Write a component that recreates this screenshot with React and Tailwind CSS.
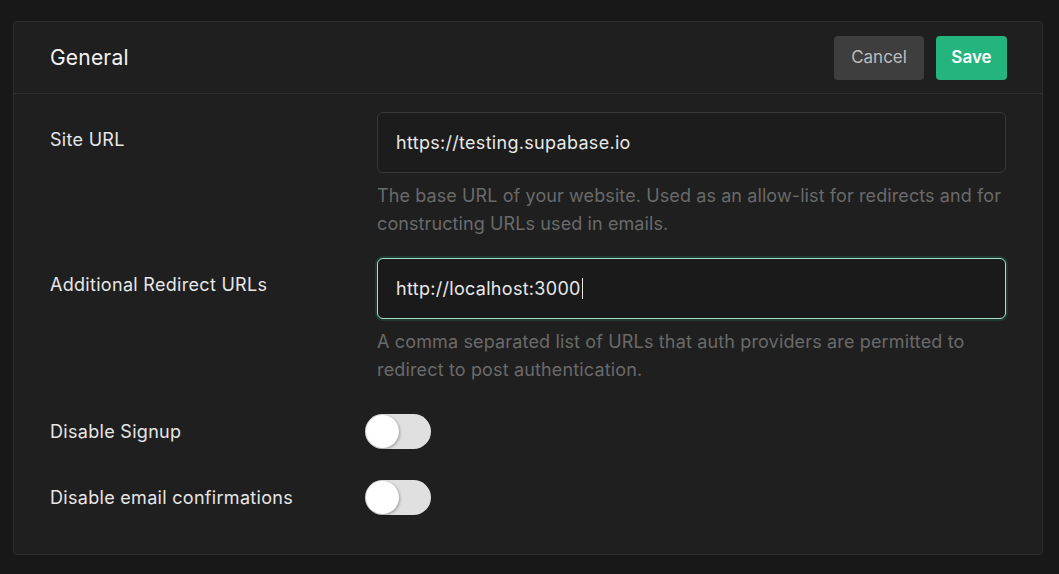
export default function App() {
  const font = { fontFamily: "Inter, 'Noto Sans', sans-serif" };
  const Toggle = () => (
    <div className="w-[66px] h-[35px] rounded-full bg-[#e0e0e0] relative shrink-0">
      <div className="absolute left-[1px] top-[1px] w-[33px] h-[33px] rounded-full bg-white shadow-[1px_1px_3px_rgba(0,0,0,0.3)]" />
    </div>
  );
  return (
    <div className="w-[1059px] h-[574px] bg-[#181818] pt-[21px] pl-[13px]" style={font}>
      <div className="w-[1030px] h-[534px] bg-[#1f1f1f] border border-[#2e2e2e] rounded-[4px]">
        <div className="h-[72px] flex items-center justify-between pl-[36px] pr-[35px] border-b border-[#2e2e2e]">
          <div className="text-[21px] tracking-[0.2px] text-[#f2f2f2]">General</div>
          <div className="flex gap-[12px]">
            <button className="w-[90px] h-[44px] rounded-[4px] bg-[#3e3e3e] text-[#bdbdbd] text-[17px]">Cancel</button>
            <button className="w-[71px] h-[44px] rounded-[4px] bg-[#24b47e] text-white text-[17px] font-semibold">Save</button>
          </div>
        </div>
        <div className="pl-[36px] pr-[36px] pt-[18px]">
          <div className="flex">
            <div className="w-[327px] pt-[14px] text-[18px] tracking-[0.3px] text-[#e6e6e6]">Site URL</div>
            <div className="w-[629px]">
              <div className="h-[61px] rounded-[6px] border border-[#383838] bg-[#1c1c1c] flex items-center px-[18px] text-[18px] tracking-[0.3px] text-[#e8e8e8]">https://testing.supabase.io</div>
              <div className="mt-[9px] text-[18px] tracking-[0.1px] leading-[28px] text-[#6a6a6a]">The base URL of your website. Used as an allow-list for redirects and for constructing URLs used in emails.</div>
            </div>
          </div>
          <div className="flex mt-[20px]">
            <div className="w-[327px] pt-[13px] text-[18px] tracking-[0.3px] text-[#e6e6e6]">Additional Redirect URLs</div>
            <div className="w-[629px]">
              <div className="h-[61px] rounded-[6px] border border-[#a3e2c6] shadow-[0_0_0_2px_rgba(36,180,126,0.18)] bg-[#1a1a1a] flex items-center px-[18px] text-[18px] tracking-[0.3px] text-[#e8e8e8]">
                http://localhost:3000<span className="inline-block w-[1px] h-[21px] bg-[#e8e8e8] ml-[1px]" />
              </div>
              <div className="mt-[9px] text-[18px] tracking-[0.15px] leading-[28px] text-[#6a6a6a]">A comma separated list of URLs that auth providers are permitted to redirect to post authentication.</div>
            </div>
          </div>
          <div className="flex items-center mt-[30px]">
            <div className="w-[315px] text-[18px] tracking-[0.3px] text-[#e6e6e6]">Disable Signup</div>
            <Toggle />
          </div>
          <div className="flex items-center mt-[31px]">
            <div className="w-[315px] text-[18px] tracking-[0.3px] text-[#e6e6e6]">Disable email confirmations</div>
            <Toggle />
          </div>
        </div>
      </div>
    </div>
  );
}
